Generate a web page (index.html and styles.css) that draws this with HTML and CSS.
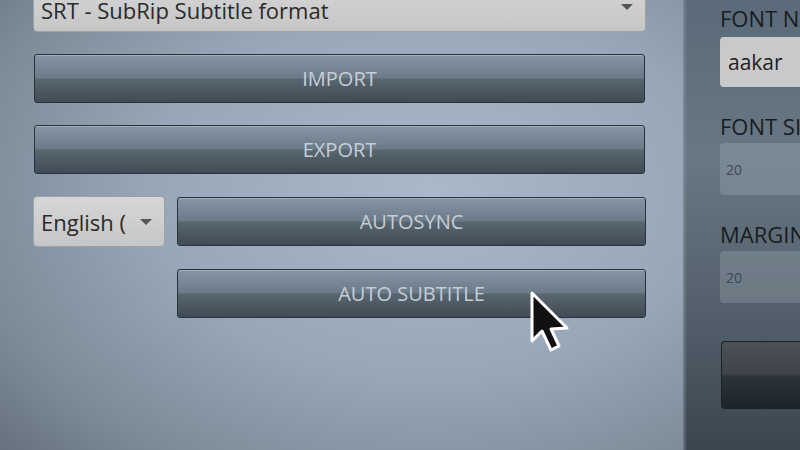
FILE: index.html
```html
<!DOCTYPE html>
<html lang="en">

<head>
  <meta charset="UTF-8">
  <meta name="viewport" content="width=device-width, initial-scale=1.0">
  <title>Subtitles</title>
  <link rel="stylesheet" href="styles.css">
</head>

<body>
  <div class="screen">
    <div class="left">
      <div class="select select_format">
        <span>SRT - SubRip Subtitle format</span>
        <span class="caret"></span>
      </div>
      <button class="btn">IMPORT</button>
      <button class="btn">EXPORT</button>
      <div class="row">
        <div class="select select_lang">
          <span>English (</span>
          <span class="caret"></span>
        </div>
        <button class="btn btn_grow">AUTOSYNC</button>
      </div>
      <div class="row">
        <button class="btn btn_grow btn_indent">AUTO SUBTITLE</button>
      </div>
    </div>
    <div class="right">
      <div class="label">FONT NAME</div>
      <div class="field field_light">aakar</div>
      <div class="label">FONT SIZE</div>
      <div class="field field_dim">20</div>
      <div class="label">MARGIN</div>
      <div class="field field_dim">20</div>
      <div class="dark_btn"></div>
    </div>
    <svg class="cursor" width="44" height="66" viewBox="0 0 44 66">
      <path d="M3 3 L3 51 L13 41 L22 60 L30 56 L22 39 L38 38 Z" fill="#111" stroke="#fff" stroke-width="3" stroke-linejoin="round"/>
    </svg>
  </div>
</body>

</html>
```

FILE: styles.css
```css
* {
  box-sizing: border-box;
}

body {
  margin: 0;
  font-family: "Open Sans", "Noto Sans", sans-serif;
}

.screen {
  position: relative;
  display: flex;
  width: 800px;
  height: 450px;
  overflow: hidden;
}

.left {
  flex: none;
  width: 683px;
  padding-left: 33px;
  display: flex;
  flex-direction: column;
  gap: 22px;
  background: radial-gradient(ellipse 620px 420px at 430px 190px, #a9b9c9 0%, #97a7b7 45%, #7d8b98 75%, #5c6873 100%);
}

.select {
  display: flex;
  align-items: center;
  justify-content: space-between;
  background: linear-gradient(#d6d6d6, #c6c6c6);
  border: 1px solid #9aa2aa;
  border-radius: 4px;
  color: #2a2a2a;
  font-size: 22px;
  padding: 0 12px 0 7px;
}

.select_format {
  width: 613px;
  height: 51px;
  margin-top: -19px;
  align-items: flex-end;
  padding-bottom: 6px;
}

.select_format .caret {
  align-self: flex-start;
  margin-top: 22px;
}

.select_lang {
  width: 132px;
  height: 51px;
  margin-top: -1px;
}

.caret {
  width: 0;
  height: 0;
  border-left: 6px solid transparent;
  border-right: 6px solid transparent;
  border-top: 6px solid #555;
}

.btn {
  width: 611px;
  height: 49px;
  margin-left: 1px;
  border: 1px solid #28323b;
  border-radius: 3px;
  background: linear-gradient(#8595a3 0%, #6c7b89 48%, #58666f 52%, #3f4b55 100%);
  color: #c6ced6;
  font: inherit;
  font-size: 20px;
  box-shadow: inset 0 1px 0 rgba(255, 255, 255, 0.25);
}

.row {
  display: flex;
  gap: 12px;
  margin-top: 1px;
}

.row:last-child {
  margin-top: 0;
}

.row .btn {
  margin-left: 0;
}

.btn_grow {
  width: 469px;
}

.row .btn_indent {
  margin-left: 144px;
}

.right {
  flex: 1;
  min-width: 0;
  overflow: hidden;
  padding-left: 37px;
  display: flex;
  flex-direction: column;
  background: linear-gradient(90deg, rgba(140, 156, 170, 0.6) 0, rgba(140, 156, 170, 0) 4px),
    linear-gradient(#5b6a78 0%, #687783 35%, #56636e 65%, #3b454f 100%);
}

.label {
  flex: none;
  color: #161c22;
  font-size: 22px;
  line-height: 24px;
  margin-top: 27px;
  white-space: nowrap;
}

.label:first-child {
  margin-top: 6px;
}

.field {
  flex: none;
  height: 50px;
  margin-top: 5px;
  border-radius: 4px 0 0 4px;
  display: flex;
  align-items: center;
  padding-left: 8px;
}

.field_light {
  margin-top: 7px;
  background: #c9c9c9;
  color: #222;
  font-size: 21px;
}

.field_dim {
  height: 52px;
  background: rgba(190, 205, 215, 0.22);
  color: #3e4a56;
  font-size: 14px;
  padding-left: 6px;
}

.dark_btn {
  flex: none;
  height: 68px;
  margin-top: 38px;
  margin-left: 1px;
  border: 1px solid #1c2228;
  border-right: 0;
  border-radius: 4px 0 0 4px;
  background: linear-gradient(#4c5059 0%, #3e434c 48%, #2e343c 52%, #1d232b 100%);
}

.cursor {
  position: absolute;
  left: 529px;
  top: 290px;
}
```
